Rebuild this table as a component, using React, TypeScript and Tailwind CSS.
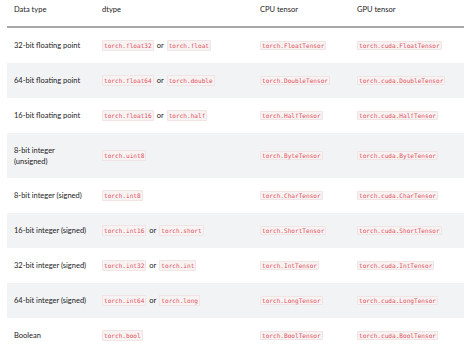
const rows: { type: string[]; dtype: string[]; cpu: string; gpu: string; tall?: boolean }[] = [
  { type: ["32-bit floating point"], dtype: ["torch.float32", "torch.float"], cpu: "torch.FloatTensor", gpu: "torch.cuda.FloatTensor" },
  { type: ["64-bit floating point"], dtype: ["torch.float64", "torch.double"], cpu: "torch.DoubleTensor", gpu: "torch.cuda.DoubleTensor" },
  { type: ["16-bit floating point"], dtype: ["torch.float16", "torch.half"], cpu: "torch.HalfTensor", gpu: "torch.cuda.HalfTensor" },
  { type: ["8-bit integer", "(unsigned)"], dtype: ["torch.uint8"], cpu: "torch.ByteTensor", gpu: "torch.cuda.ByteTensor", tall: true },
  { type: ["8-bit integer (signed)"], dtype: ["torch.int8"], cpu: "torch.CharTensor", gpu: "torch.cuda.CharTensor" },
  { type: ["16-bit integer (signed)"], dtype: ["torch.int16", "torch.short"], cpu: "torch.ShortTensor", gpu: "torch.cuda.ShortTensor" },
  { type: ["32-bit integer (signed)"], dtype: ["torch.int32", "torch.int"], cpu: "torch.IntTensor", gpu: "torch.cuda.IntTensor" },
  { type: ["64-bit integer (signed)"], dtype: ["torch.int64", "torch.long"], cpu: "torch.LongTensor", gpu: "torch.cuda.LongTensor" },
  { type: ["Boolean"], dtype: ["torch.bool"], cpu: "torch.BoolTensor", gpu: "torch.cuda.BoolTensor" },
];

function Code({ children }: { children: string }) {
  return (
    <code className="rounded-[1px] border border-[#f0e4e4] bg-[#f8f3f3] px-[1px] font-['DejaVu_Sans_Mono',monospace] text-[6.1px] leading-[9px] text-[#e0505d]">
      {children}
    </code>
  );
}

export default function App() {
  return (
    <div className="h-[345px] w-[474px] overflow-hidden bg-white font-['Lato',sans-serif] text-[7.5px] text-[#222]">
      <div className="mx-[7px] w-[457px]">
        <div className="grid h-[28px] grid-cols-[88px_158px_97px_1fr] border-b-2 border-[#a8a8a8] px-[7px] pt-[4px]">
          <span>Data type</span>
          <span>dtype</span>
          <span>CPU tensor</span>
          <span>GPU tensor</span>
        </div>
        {rows.map((r, i) => (
          <div
            key={r.cpu}
            className={`grid grid-cols-[88px_158px_97px_1fr] items-center px-[7px] ${r.tall ? "h-[45px]" : "h-[35px]"} ${i % 2 === 1 ? "bg-[#f2f3f5]" : ""}`}
          >
            <div className="leading-[11px]">
              {r.type.map((t) => (
                <div key={t}>{t}</div>
              ))}
            </div>
            <div className="flex items-center gap-[3px]">
              <Code>{r.dtype[0]}</Code>
              {r.dtype[1] && (
                <>
                  <span>or</span>
                  <Code>{r.dtype[1]}</Code>
                </>
              )}
            </div>
            <div>
              <Code>{r.cpu}</Code>
            </div>
            <div>
              <Code>{r.gpu}</Code>
            </div>
          </div>
        ))}
      </div>
    </div>
  );
}
